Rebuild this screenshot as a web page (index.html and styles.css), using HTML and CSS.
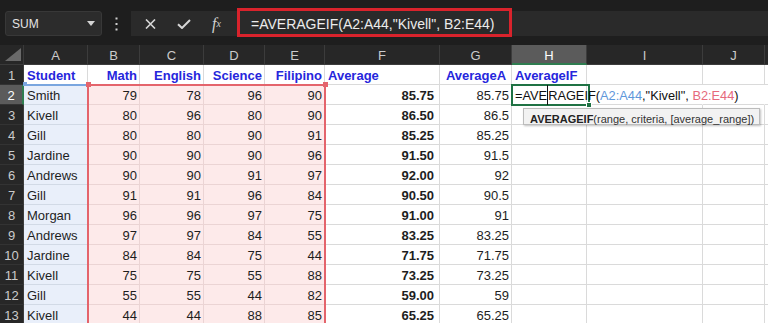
FILE: index.html
```html
<!DOCTYPE html>
<html>
<head>
<meta charset="utf-8">
<link rel="stylesheet" href="styles.css">
</head>
<body>
<div class="toolbar">
  <div class="namebox"><span>SUM</span><svg width="8" height="5" viewBox="0 0 8 5"><path d="M0 0H8L4 5Z" fill="#d4d4d4"/></svg></div>
  <div class="dots"><svg width="3" height="14" viewBox="0 0 3 14"><rect x="0.5" y="0.5" width="2" height="2" fill="#cfcfcf"/><rect x="0.5" y="6" width="2" height="2" fill="#cfcfcf"/><rect x="0.5" y="11.5" width="2" height="2" fill="#cfcfcf"/></svg></div>
  <div class="fbar">
    <div class="fbtns">
      <span class="fbtn"><svg width="11" height="10" viewBox="0 0 11 10"><path d="M1 0.5L10 9.5M10 0.5L1 9.5" stroke="#d6d6d6" stroke-width="1.6" fill="none"/></svg></span>
      <span class="fbtn"><svg width="14" height="10" viewBox="0 0 14 10"><path d="M1 5.2L5 9L13 1" stroke="#d6d6d6" stroke-width="2" fill="none"/></svg></span>
      <span class="fbtn fx">f<sub>x</sub></span>
    </div>
    <div class="annot">=AVERAGEIF(A2:A44,"Kivell", B2:E44)</div>
  </div>
</div>
<div class="sheet">
  <div class="corner"><svg width="16" height="13" viewBox="0 0 16 13"><path d="M16 0V13H0Z" fill="#6a6a6a"/></svg></div>
  <div class="ch">A</div><div class="ch">B</div><div class="ch">C</div><div class="ch">D</div><div class="ch">E</div><div class="ch">F</div><div class="ch">G</div><div class="ch sel">H</div><div class="ch">I</div><div class="ch">J</div><div class="ch"></div>

  <div class="rh">1</div><div class="c h">Student</div><div class="c h n">Math</div><div class="c h n">English</div><div class="c h n">Science</div><div class="c h n">Filipino</div><div class="c h">Average</div><div class="c h ctr">AverageA</div><div class="c h">AverageIF</div><div class="c"></div><div class="c"></div><div class="c"></div>

  <div class="rh sel">2</div><div class="c blu">Smith</div><div class="c pk n">79</div><div class="c pk n">78</div><div class="c pk n">96</div><div class="c pk n">90</div><div class="c n avg">85.75</div><div class="c n">85.75</div><div class="c fcell"><span class="ftxt">=AVE<span class="caret"></span>RAGEIF(<span class="ref1">A2:A44</span>,"Kivell", <span class="ref2">B2:E44</span>)</span></div><div class="c nogrid"></div><div class="c nogrid"></div><div class="c"></div>

  <div class="rh">3</div><div class="c blu">Kivell</div><div class="c pk n">80</div><div class="c pk n">96</div><div class="c pk n">80</div><div class="c pk n">90</div><div class="c n avg">86.50</div><div class="c n">86.5</div><div class="c"></div><div class="c"></div><div class="c"></div><div class="c"></div>

  <div class="rh">4</div><div class="c blu">Gill</div><div class="c pk n">80</div><div class="c pk n">80</div><div class="c pk n">90</div><div class="c pk n">91</div><div class="c n avg">85.25</div><div class="c n">85.25</div><div class="c"></div><div class="c"></div><div class="c"></div><div class="c"></div>

  <div class="rh">5</div><div class="c blu">Jardine</div><div class="c pk n">90</div><div class="c pk n">90</div><div class="c pk n">90</div><div class="c pk n">96</div><div class="c n avg">91.50</div><div class="c n">91.5</div><div class="c"></div><div class="c"></div><div class="c"></div><div class="c"></div>

  <div class="rh">6</div><div class="c blu">Andrews</div><div class="c pk n">90</div><div class="c pk n">90</div><div class="c pk n">91</div><div class="c pk n">97</div><div class="c n avg">92.00</div><div class="c n">92</div><div class="c"></div><div class="c"></div><div class="c"></div><div class="c"></div>

  <div class="rh">7</div><div class="c blu">Gill</div><div class="c pk n">91</div><div class="c pk n">91</div><div class="c pk n">96</div><div class="c pk n">84</div><div class="c n avg">90.50</div><div class="c n">90.5</div><div class="c"></div><div class="c"></div><div class="c"></div><div class="c"></div>

  <div class="rh">8</div><div class="c blu">Morgan</div><div class="c pk n">96</div><div class="c pk n">96</div><div class="c pk n">97</div><div class="c pk n">75</div><div class="c n avg">91.00</div><div class="c n">91</div><div class="c"></div><div class="c"></div><div class="c"></div><div class="c"></div>

  <div class="rh">9</div><div class="c blu">Andrews</div><div class="c pk n">97</div><div class="c pk n">97</div><div class="c pk n">84</div><div class="c pk n">55</div><div class="c n avg">83.25</div><div class="c n">83.25</div><div class="c"></div><div class="c"></div><div class="c"></div><div class="c"></div>

  <div class="rh">10</div><div class="c blu">Jardine</div><div class="c pk n">84</div><div class="c pk n">84</div><div class="c pk n">75</div><div class="c pk n">44</div><div class="c n avg">71.75</div><div class="c n">71.75</div><div class="c"></div><div class="c"></div><div class="c"></div><div class="c"></div>

  <div class="rh">11</div><div class="c blu">Kivell</div><div class="c pk n">75</div><div class="c pk n">75</div><div class="c pk n">55</div><div class="c pk n">88</div><div class="c n avg">73.25</div><div class="c n">73.25</div><div class="c"></div><div class="c"></div><div class="c"></div><div class="c"></div>

  <div class="rh">12</div><div class="c blu">Gill</div><div class="c pk n">55</div><div class="c pk n">55</div><div class="c pk n">44</div><div class="c pk n">82</div><div class="c n avg">59.00</div><div class="c n">59</div><div class="c"></div><div class="c"></div><div class="c"></div><div class="c"></div>

  <div class="rh">13</div><div class="c blu">Kivell</div><div class="c pk n">44</div><div class="c pk n">44</div><div class="c pk n">88</div><div class="c pk n">85</div><div class="c n avg">65.25</div><div class="c n">65.25</div><div class="c"></div><div class="c"></div><div class="c"></div><div class="c"></div>

  <div class="rng-blue"></div>
  <div class="sq sq-blue"></div>
  <div class="rng-red"></div>
  <div class="sq sq-red1"></div>
  <div class="sq sq-red2"></div>
  <div class="active"></div>
  <div class="handle"></div>
  <div class="tip"><b>AVERAGEIF</b>(range, criteria, [average_range])</div>
</div>
</body>
</html>
```
FILE: styles.css
```css
html, body {
  margin: 0;
  padding: 0;
}
body {
  width: 768px;
  height: 323px;
  overflow: hidden;
  background: #1e1e1e;
  font-family: "Liberation Sans", Arial, sans-serif;
}

/* ---------- toolbar ---------- */
.toolbar {
  display: flex;
  align-items: flex-start;
  height: 45px;
  padding-top: 11px;
  box-sizing: border-box;
  background: #1e1e1e;
}
.namebox {
  margin-left: 5px;
  width: 97px;
  height: 25px;
  box-sizing: border-box;
  background: #2c2c2c;
  border: 1px solid #383838;
  border-radius: 3px;
  display: flex;
  align-items: center;
  justify-content: space-between;
  padding: 0 6px 0 6px;
  color: #e4e4e4;
  font-size: 12px;
}
.dots {
  width: 29px;
  height: 25px;
  display: flex;
  align-items: center;
  justify-content: center;
}
.fbar {
  flex: 1;
  height: 25px;
  background: #2a2a2a;
  display: flex;
  align-items: flex-start;
}
.fbtns {
  display: flex;
  width: 106px;
  height: 25px;
  padding-left: 3px;
  box-sizing: border-box;
}
.fbtn {
  width: 33px;
  height: 25px;
  display: flex;
  align-items: center;
  justify-content: center;
}
.fx {
  font-family: "Liberation Serif", "Times New Roman", serif;
  font-style: italic;
  font-size: 16px;
  color: #d0d0d0;
  line-height: 25px;
}
.fx sub {
  font-size: 10px;
  vertical-align: -1px;
}
.annot {
  margin-top: -3px;
  width: 275px;
  height: 29px;
  box-sizing: border-box;
  border: 3px solid #d9232c;
  padding: 4px 0 0 11px;
  font-size: 14px;
  line-height: 18px;
  color: #ececec;
  white-space: nowrap;
}

/* ---------- sheet ---------- */
.sheet {
  position: relative;
  display: grid;
  grid-template-columns: 24px 64px 52px 64px 61px 60px 115px 72px 75px 116px 62px 60px;
  grid-auto-rows: 20px;
  font-size: 13px;
}
.sheet > div {
  box-sizing: border-box;
  line-height: 21px;
  white-space: nowrap;
}
.corner {
  background: #272727;
  border-right: 1px solid #3a3a3a;
  border-bottom: 1px solid #3a3a3a;
  display: flex;
  align-items: flex-end;
  justify-content: flex-end;
  padding: 0 2px 3px 0;
}
.ch {
  background: #272727;
  color: #cbcbcb;
  text-align: center;
  border-right: 1px solid #3c3c3c;
  border-bottom: 1px solid #3c3c3c;
}
.ch.sel {
  background: #5b5b5b;
  color: #ffffff;
  border-bottom: 2px solid #2f7d50;
}
.rh {
  background: #272727;
  color: #cbcbcb;
  text-align: center;
  border-right: 1px solid #3c3c3c;
  border-bottom: 1px solid #333333;
}
.rh.sel {
  background: #5b5b5b;
  color: #ffffff;
  border-right: 2px solid #2f7d50;
}
.c {
  background: #ffffff;
  color: #1e1e1e;
  border-right: 1px solid #dadada;
  border-bottom: 1px solid #dadada;
  padding: 0 2px 0 3px;
}
.c.n { text-align: right; }
.c.ctr { text-align: center; }
.c.h {
  font-weight: bold;
  color: #2626dc;
}
.c.avg {
  font-weight: bold;
  padding-right: 5px;
}
.c.blu {
  background: #e9effa;
  border-color: #d2dae6;
}
.c.pk {
  background: #fdeaea;
  border-color: #ebd4d4;
}
.c.nogrid { border-right-color: #ffffff; }
.fcell {
  color: #111111;
  font-size: 12.8px;
}
.ftxt {
  position: relative;
  z-index: 2;
}
.ref1 { color: #5f98db; }
.ref2 { color: #e66a7c; }
.caret {
  display: inline-block;
  width: 0;
  height: 20px;
  border-left: 1px solid #111111;
  vertical-align: top;
}

/* ---------- overlays ---------- */
.rng-blue {
  position: absolute;
  left: 24px;
  top: 39px;
  width: 64px;
  height: 2px;
  background: #7aa6df;
}
.rng-red {
  position: absolute;
  left: 87px;
  top: 39px;
  width: 239px;
  height: 300px;
  box-sizing: border-box;
  border: 2px solid #e4646c;
  border-bottom: none;
}
.sq {
  position: absolute;
  width: 5px;
  height: 5px;
}
.sq-blue { left: 23px; top: 37px; width: 4px; height: 4px; background: #7aa6df; }
.sq-red1 { left: 86px; top: 37px; background: #e4646c; }
.sq-red2 { left: 323px; top: 37px; background: #e4646c; }
.active {
  position: absolute;
  z-index: 1;
  left: 511px;
  top: 39px;
  width: 79px;
  height: 22px;
  box-sizing: border-box;
  border: 2px solid #1f7244;
}
.handle {
  position: absolute;
  z-index: 3;
  left: 586px;
  top: 57px;
  width: 6px;
  height: 6px;
  box-sizing: border-box;
  background: #1f7244;
  border: 1px solid #ffffff;
}
.tip {
  position: absolute;
  z-index: 3;
  left: 523px;
  top: 63px;
  width: 237px;
  height: 17px;
  box-sizing: border-box;
  background: #f2f2f2;
  border: 1px solid #bcbcbc;
  box-shadow: 1px 1px 2px rgba(0, 0, 0, 0.25);
  padding-left: 6px;
  font-size: 11px;
  line-height: 15px;
  color: #333333;
}
.tip b { color: #222222; }
```
